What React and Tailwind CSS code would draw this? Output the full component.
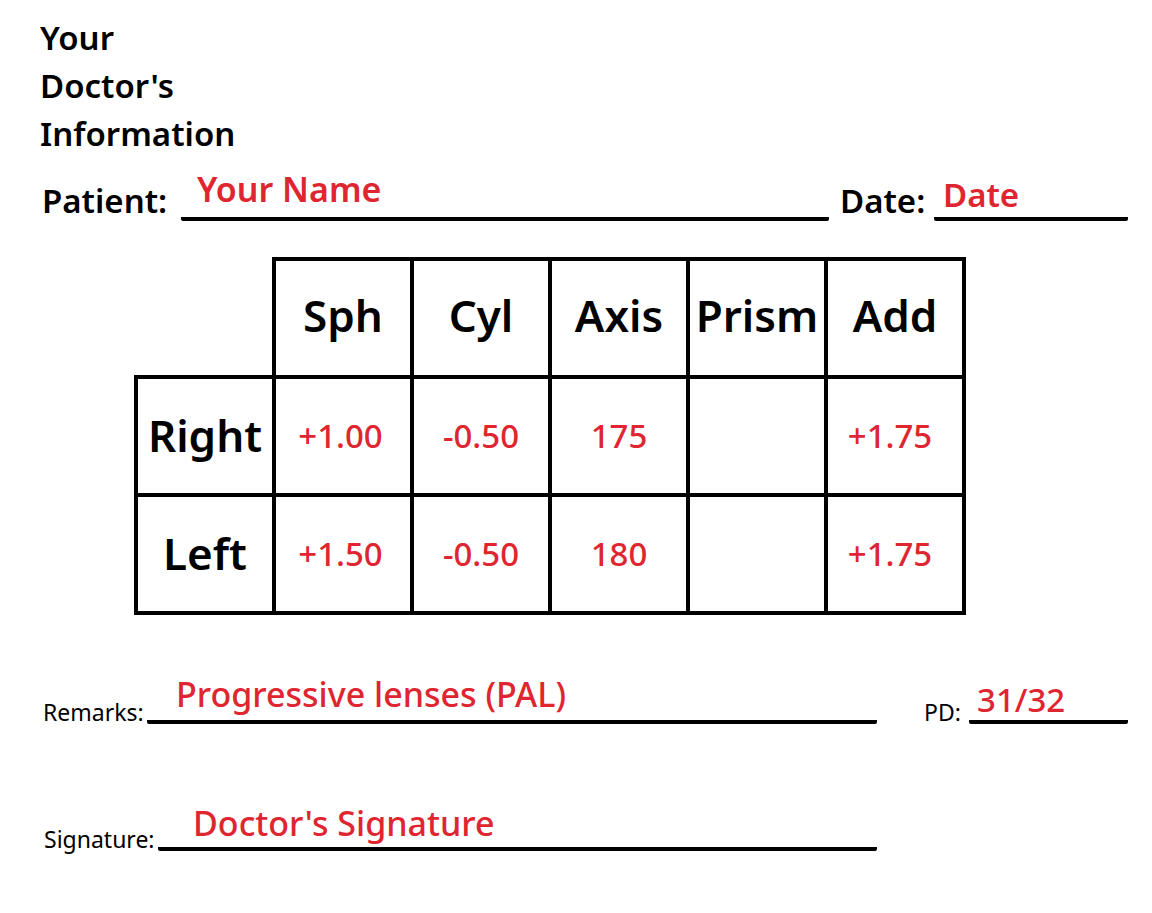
import React from "react";

const RED = "text-[#df2630]";

function Cell({ children, className = "", empty = false }) {
  return (
    <div
      className={
        "w-[142px] h-[122px] -ml-1 flex items-center justify-center " +
        (empty ? "" : "border-4 border-black ") +
        className
      }
    >
      {children}
    </div>
  );
}

export default function App() {
  const head = ["Sph", "Cyl", "Axis", "Prism", "Add"];
  const rows = [
    ["Right", "+1.00", "-0.50", "175", "", "+1.75"],
    ["Left", "+1.50", "-0.50", "180", "", "+1.75"],
  ];
  const valPad = ["", "pr-[5px]", "", "", "", "pr-[10px]"];
  return (
    <div className="w-[1152px] h-[913px] bg-white text-black font-['Noto_Sans',sans-serif] overflow-hidden">
      <div className="pl-10 pt-[14px] text-[33px] font-semibold leading-[48px]">
        <div>Your</div>
        <div>Doctor's</div>
        <div>Information</div>
      </div>

      <div className="flex items-end pl-[42px] mt-[13px] h-[50px]">
        <div className="w-[139px] text-[33px] font-semibold leading-none pb-[4px]">Patient:</div>
        <div className="w-[648px] h-[50px] border-b-[4px] border-black rounded-[2px] relative">
          <span className={"absolute left-[16px] bottom-[11px] leading-none text-[34px] font-semibold whitespace-nowrap " + RED}>
            Your Name
          </span>
        </div>
        <div className="ml-[11px] w-[94px] text-[33px] font-semibold leading-none pb-[4px]">Date:</div>
        <div className="w-[194px] h-[50px] border-b-[4px] border-black rounded-[2px] relative">
          <span className={"absolute left-[9px] bottom-[6px] leading-none text-[33px] font-semibold whitespace-nowrap " + RED}>
            Date
          </span>
        </div>
      </div>

      <div className="mt-[36px] pl-[138px] flex flex-col">
        <div className="flex">
          <Cell empty />
          {head.map((h) => (
            <Cell key={h} className="text-[44px] font-semibold">
              <span className="-mt-[6px]">{h}</span>
            </Cell>
          ))}
        </div>
        {rows.map((r) => (
          <div key={r[0]} className="flex -mt-1">
            {r.map((v, i) => (
              <Cell
                key={i}
                className={
                  i === 0
                    ? "text-[44px] font-semibold"
                    : "text-[33px] font-medium " + valPad[i] + " " + RED
                }
              >
                <span className={i === 0 ? "-mt-[2px]" : ""}>{v}</span>
              </Cell>
            ))}
          </div>
        ))}
      </div>

      <div className="flex items-end pl-[43px] mt-[59px] h-[50px]">
        <div className="w-[104px] text-[23px] font-normal leading-none">Remarks:</div>
        <div className="w-[730px] h-[50px] border-b-[4px] border-black rounded-[2px] relative">
          <span className={"absolute left-[29px] bottom-[9px] leading-none text-[34px] font-medium whitespace-nowrap " + RED}>
            Progressive lenses (PAL)
          </span>
        </div>
        <div className="ml-[47px] w-[45px] text-[23px] font-normal leading-none">PD:</div>
        <div className="w-[159px] h-[50px] border-b-[4px] border-black rounded-[2px] relative">
          <span className={"absolute left-[8px] bottom-[4px] leading-none text-[33px] font-medium whitespace-nowrap " + RED}>
            31/32
          </span>
        </div>
      </div>

      <div className="flex items-end pl-[44px] mt-[77px] h-[50px]">
        <div className="w-[114px] text-[23px] font-normal leading-none">Signature:</div>
        <div className="w-[719px] h-[50px] border-b-[4px] border-black rounded-[2px] relative">
          <span className={"absolute left-[35px] bottom-[7px] leading-none text-[34px] font-medium whitespace-nowrap " + RED}>
            Doctor's Signature
          </span>
        </div>
      </div>
    </div>
  );
}
